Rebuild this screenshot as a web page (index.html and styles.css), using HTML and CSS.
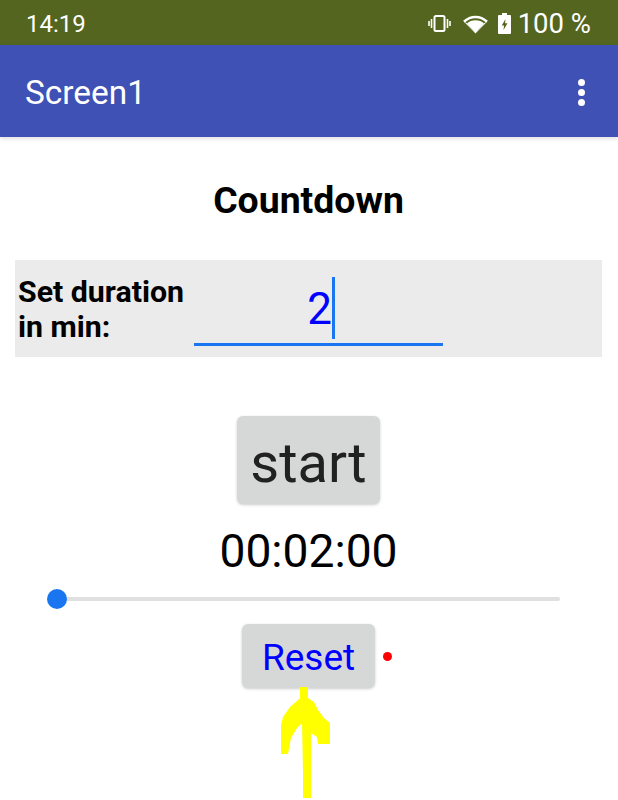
FILE: index.html
```html
<!DOCTYPE html>
<html lang="en">
<head>
  <meta charset="UTF-8" />
  <title>Screen1</title>
  <link rel="stylesheet" href="styles.css">
</head>
<body>
  <div class="phone">
    <div class="status-bar">
      <span class="clock">14:19</span>
      <div class="status-icons">
        <!-- vibrate -->
        <svg class="icon-vibrate" width="23" height="17" viewBox="0 0 23 17">
          <rect x="6.500" y="1" width="10" height="15" rx="1.500" fill="none" stroke="#fff" stroke-width="2"/>
          <path d="M3.500 4v9M1 6v5M19.500 4v9M22 6v5" stroke="#fff" stroke-width="1.600" fill="none"/>
        </svg>
        <!-- wifi -->
        <svg class="icon-wifi" width="25" height="20" viewBox="0 0 25 20">
          <path d="M12.500 19.500 4 9.200C6.200 7.400 9.200 6.300 12.500 6.300s6.300 1.100 8.500 2.900z" fill="#fff"/>
          <path d="M1 7.800C4 4.900 8 3 12.500 3S21 4.900 24 7.800" fill="none" stroke="#fff" stroke-width="2.600"/>
          <path d="M12.500 19.500 1 7.800 4 9.200zM12.500 19.500 24 7.800 21 9.200z" fill="#fff"/>
        </svg>
        <!-- battery charging -->
        <svg class="icon-battery" width="13" height="21" viewBox="0 0 13 21">
          <path d="M4 0h5v2h3a1 1 0 0 1 1 1v17a1 1 0 0 1-1 1H1a1 1 0 0 1-1-1V3a1 1 0 0 1 1-1h3z" fill="#fff"/>
          <path d="M7.500 6 3.800 12.500h2.300L5.500 17 9.500 10.200H7z" fill="#53651f"/>
        </svg>
        <span class="battery-text">100 %</span>
      </div>
    </div>

    <div class="app-bar">
      <span class="app-title">Screen1</span>
      <div class="menu-dots"><i></i><i></i><i></i></div>
    </div>

    <div class="content">
      <h1 class="heading">Countdown</h1>

      <div class="duration-panel">
        <div class="duration-label">Set duration<br>in min:</div>
        <div class="duration-input"><span class="duration-value">2</span><span class="caret"></span></div>
      </div>

      <button class="btn btn-start">start</button>
      <div class="timer">00:02:00</div>

      <div class="slider"><span class="thumb"></span></div>

      <div class="reset-row">
        <button class="btn btn-reset">Reset</button>
        <span class="red-dot"></span>
      </div>
    </div>

    <!-- hand drawn arrow on top of the screenshot -->
    <svg class="arrow" width="618" height="800" viewBox="0 0 618 800">
      <path d="M300 687 308 687 308 698 314 702 318 710 324 718 330 723 330 744 318 744 317 737 311 733 311 798 303 798 303 772 302 723 297 728 291 738 288 754 281 754 281 725 283 717 290 707 298 700 300 698z" fill="#ffff00"/>
    </svg>
  </div>
</body>
</html>
```

FILE: styles.css
```css
body {
  margin: 0;
  font-family: Roboto, sans-serif;
  background: #fff;
}

.phone {
  position: relative;
  width: 618px;
  height: 800px;
  overflow: hidden;
}

.status-bar {
  height: 45px;
  background: #53651f;
  color: #fff;
  display: flex;
  align-items: center;
  justify-content: space-between;
  padding: 2px 27px 0 26px;
  box-sizing: border-box;
  font-size: 24px;
}

.status-icons {
  display: flex;
  align-items: center;
}

.icon-vibrate {
  margin-right: 12px;
}

.icon-wifi {
  margin-right: 10px;
}

.icon-battery {
  margin-right: 7px;
}

.battery-text {
  font-size: 27.500px;
}

.app-bar {
  height: 92px;
  background: #3f51b5;
  color: #fff;
  display: flex;
  align-items: center;
  justify-content: space-between;
  padding: 2px 33px 0 25px;
  box-sizing: border-box;
  box-shadow: 0 2px 4px rgba(0, 0, 0, 0.12);
  position: relative;
}

.app-title {
  font-size: 33.400px;
}

.menu-dots {
  display: flex;
  flex-direction: column;
  gap: 3px;
}

.menu-dots i {
  display: block;
  width: 7px;
  height: 7px;
  border-radius: 50%;
  background: #fff;
}

.content {
  display: flex;
  flex-direction: column;
  align-items: center;
  padding-right: 1px;
}

.heading {
  margin: 43px 0 39px;
  height: 41px;
  line-height: 41px;
  font-size: 37.400px;
  font-weight: 700;
  color: #000;
}

.duration-panel {
  width: 587px;
  height: 97px;
  background: #ebebeb;
  display: flex;
  align-items: center;
  padding-left: 3px;
  box-sizing: border-box;
}

.duration-label {
  width: 176px;
  font-size: 30.300px;
  font-weight: 700;
  line-height: 35px;
  color: #000;
}

.duration-input {
  position: relative;
  width: 249px;
  height: 66px;
  margin-top: 5px;
  border-bottom: 3px solid #1976f0;
  display: flex;
  justify-content: center;
  align-items: flex-end;
}

.duration-value {
  font-size: 44px;
  line-height: 62px;
  color: #0000ff;
  margin: 0 0 3px 5px;
}

.caret {
  width: 3px;
  height: 62px;
  margin-bottom: 4px;
  background: #1976f0;
}

.btn {
  display: block;
  border: 0;
  border-radius: 6px;
  background: #d6d7d7;
  font-family: Roboto, sans-serif;
  box-shadow: 0 1px 3px rgba(0, 0, 0, 0.2);
  padding: 0;
}

.btn-start {
  width: 143px;
  height: 88px;
  margin-top: 59px;
  padding-top: 5px;
  font-size: 56px;
  color: #212121;
}

.timer {
  margin-top: 20px;
  height: 54px;
  line-height: 54px;
  font-size: 46.200px;
  color: #000;
}

.slider {
  position: relative;
  width: 503px;
  height: 4px;
  margin: 19px 0 0 0;
  background: #e0e0e0;
  border-radius: 2px;
}

.thumb {
  position: absolute;
  left: -10px;
  top: -8px;
  width: 20px;
  height: 20px;
  border-radius: 50%;
  background: #1976f0;
}

.reset-row {
  position: relative;
  margin-top: 23px;
}

.btn-reset {
  width: 133px;
  height: 64px;
  padding-top: 2px;
  font-size: 37px;
  color: #0000ff;
}

.red-dot {
  position: absolute;
  left: 141px;
  top: 28px;
  width: 9px;
  height: 9px;
  border-radius: 50%;
  background: #ff0000;
}

.arrow {
  position: absolute;
  left: 0;
  top: 0;
}
```
